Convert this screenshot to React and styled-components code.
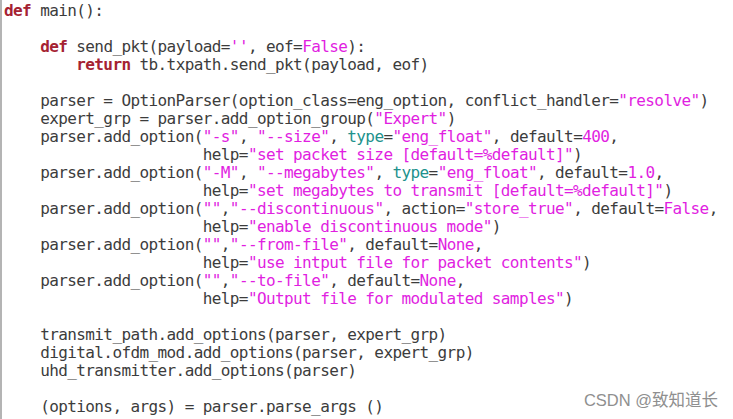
import React from 'react'
import styled, { createGlobalStyle, css } from 'styled-components'

const GlobalStyle = createGlobalStyle`
  html, body {
    margin: 0;
    padding: 0;
    background: #fff;
  }
`

const Page = styled.div`
  position: relative;
  width: 733px;
  height: 419px;
  overflow: hidden;
  background: #fff;
  box-sizing: border-box;
  border-left: 2px solid #b4b4b4;
  padding: 2px 0 0 2px;
`

const Code = styled.pre`
  margin: 0;
  font-family: "DejaVu Sans Mono", "Liberation Mono", monospace;
  font-size: 16px;
  letter-spacing: -0.6px;
  line-height: 18px;
  color: #3c3c3c;
`

const Line = styled.div`
  height: 18px;
  white-space: pre;
`

const tokenStyles = {
  kw: css`
    color: #a52232;
    font-weight: bold;
  `,
  str: css`
    color: #e11ee1;
  `,
  num: css`
    color: #e11ee1;
  `,
  builtin: css`
    color: #21918c;
  `,
}

const Token = styled.span`
  ${({ kind }) => tokenStyles[kind]};
`

const Watermark = styled.div`
  position: absolute;
  right: 15px;
  bottom: 8px;
  font-family: "Liberation Sans", "Noto Sans CJK SC", sans-serif;
  font-size: 16.5px;
  color: #8f8f8f;
`

const source = [
  'def main():',
  '',
  "    def send_pkt(payload='', eof=False):",
  '        return tb.txpath.send_pkt(payload, eof)',
  '',
  '    parser = OptionParser(option_class=eng_option, conflict_handler="resolve")',
  '    expert_grp = parser.add_option_group("Expert")',
  '    parser.add_option("-s", "--size", type="eng_float", default=400,',
  '                      help="set packet size [default=%default]")',
  '    parser.add_option("-M", "--megabytes", type="eng_float", default=1.0,',
  '                      help="set megabytes to transmit [default=%default]")',
  '    parser.add_option("","--discontinuous", action="store_true", default=False,',
  '                      help="enable discontinuous mode")',
  '    parser.add_option("","--from-file", default=None,',
  '                      help="use intput file for packet contents")',
  '    parser.add_option("","--to-file", default=None,',
  '                      help="Output file for modulated samples")',
  '',
  '    transmit_path.add_options(parser, expert_grp)',
  '    digital.ofdm_mod.add_options(parser, expert_grp)',
  '    uhd_transmitter.add_options(parser)',
  '',
  '    (options, args) = parser.parse_args ()',
]

const TOKEN_RE = /("[^"]*"|'[^']*'|\b(?:def|return)\b|\b(?:False|None|True)\b|\b\d+(?:\.\d+)?\b|\btype\b)/g

function kindOf(part) {
  if (part[0] === '"' || part[0] === "'") return 'str'
  if (part === 'def' || part === 'return') return 'kw'
  if (part === 'type') return 'builtin'
  return 'num'
}

function tokenize(text) {
  const out = []
  let last = 0
  text.replace(TOKEN_RE, (m, _g, offset) => {
    if (offset > last) out.push({ kind: null, text: text.slice(last, offset) })
    out.push({ kind: kindOf(m), text: m })
    last = offset + m.length
    return m
  })
  if (last < text.length) out.push({ kind: null, text: text.slice(last) })
  return out
}

export default function App() {
  return (
    <>
      <GlobalStyle />
      <Page>
        <Code>
          {source.map((text, i) => (
            <Line key={i}>
              {tokenize(text).map((t, j) =>
                t.kind ? <Token key={j} kind={t.kind}>{t.text}</Token> : t.text
              )}
            </Line>
          ))}
        </Code>
        <Watermark>CSDN @致知道长</Watermark>
      </Page>
    </>
  )
}
